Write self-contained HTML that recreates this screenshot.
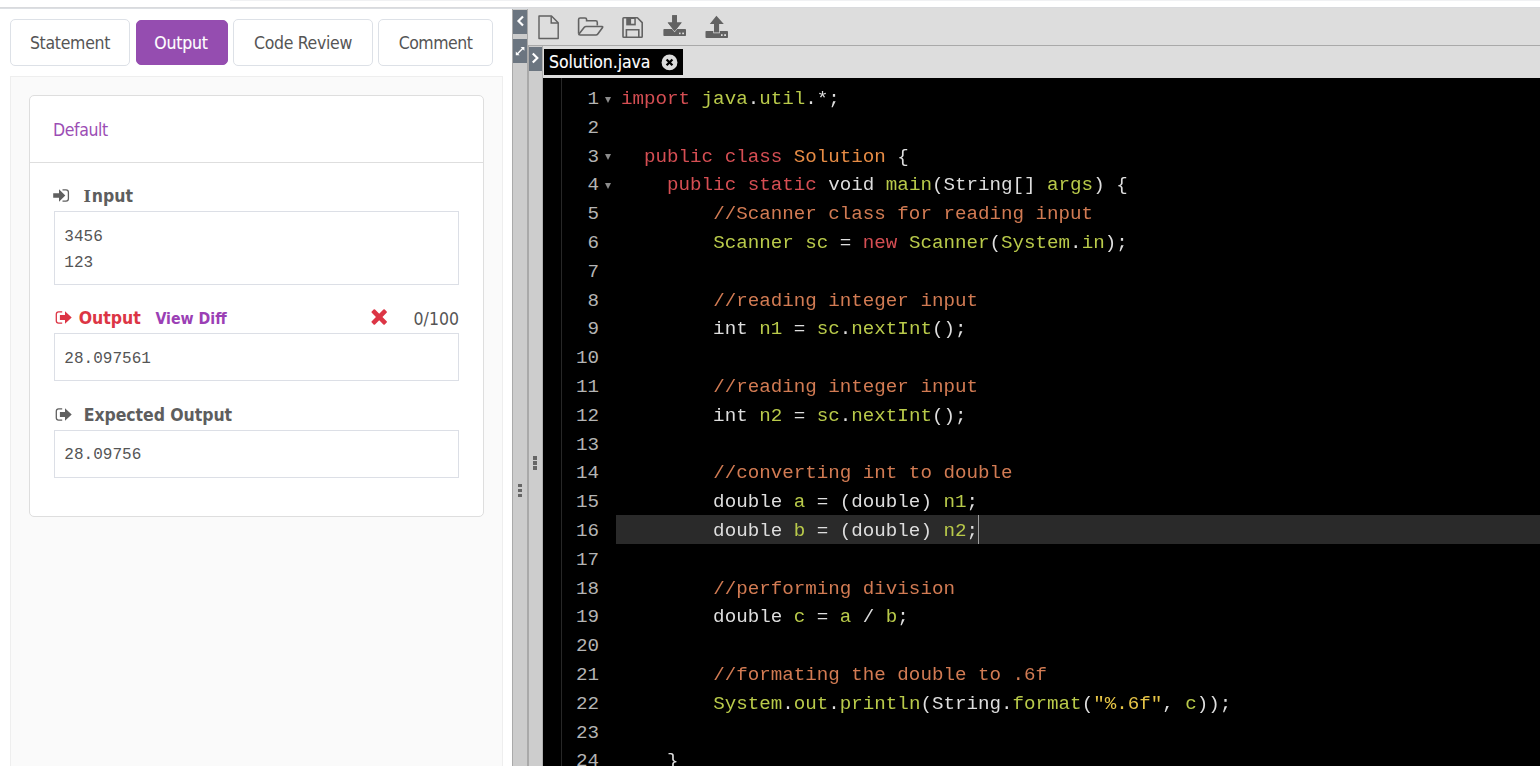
<!DOCTYPE html>
<html lang="en">
<head>
<meta charset="utf-8">
<title>Solution.java - Output</title>
<style>
html,body{margin:0;padding:0;}
body{width:1540px;height:766px;overflow:hidden;background:#fff;position:relative;
  font-family:"DejaVu Sans Condensed","Liberation Sans",sans-serif;font-size:17.5px;color:#555;letter-spacing:-0.3px;}
.abs{position:absolute;}
/* top lines */
#topfaint{left:230px;top:0;width:1310px;height:1px;background:#f0f1f3;}
#topline2{left:0;top:7px;width:1540px;height:1px;background:#d9dadd;}
#topline{left:0;top:7px;width:528px;height:2px;background:#dcdfe3;}
/* left tabs */
.tab{position:absolute;box-sizing:border-box;border:1px solid #dde1e7;border-radius:5px;background:#fff;
  color:#555;text-align:center;height:47px;top:19px;line-height:47px;font-size:17.5px;}
.tab.on{background:#954db0;border-color:#954db0;color:#fff;-webkit-text-stroke:0.12px #fff;top:20px;height:45px;line-height:45px;}
#panel{left:10px;top:76px;width:493px;height:700px;box-sizing:border-box;background:#fafafa;border:1px solid #eeeeee;}
#card{left:29px;top:95px;width:455px;height:422px;box-sizing:border-box;background:#fff;border:1px solid #dedede;border-radius:5px;}
#divider{left:30px;top:162px;width:453px;height:1px;background:#dedede;}
.box{position:absolute;box-sizing:border-box;left:54px;width:405px;border:1px solid #dcdfe6;background:#fff;}
.mono{position:absolute;letter-spacing:0.025px;font-family:"Liberation Mono",monospace;font-size:16px;color:#555;white-space:pre;line-height:26.25px;}
.h{position:absolute;font-weight:bold;font-size:17.5px;color:#5e5e5e;white-space:nowrap;line-height:20px;letter-spacing:0;}
/* splitter strips */
#strip1{left:512px;top:9px;width:17px;height:760px;background:#cccccc;border-left:1px solid #aaa;border-right:2px solid #a9a9a9;box-sizing:border-box;}
#strip2{left:529px;top:46px;width:14px;height:730px;background:#cdcdcd;border-right:1px solid #b0b0b0;box-sizing:border-box;}
.sbtn{position:absolute;background:#6b7580;}
/* toolbar */
#toolbar{left:528px;top:8px;width:1012px;height:37px;background:#dddddd;}
#tbline{left:528px;top:45px;width:1012px;height:1px;background:#a9a9a9;}
#tabrow{left:543px;top:46px;width:997px;height:32px;background:#dddddd;}
#ftab{left:544px;top:49px;width:139px;height:26px;background:#000;color:#fff;font-size:17.5px;line-height:26px;white-space:nowrap;}
/* editor */
#editor{left:543px;top:78px;width:997px;height:700px;background:#000;overflow:hidden;}
#gline{left:561px;top:78px;width:1px;height:700px;background:#272727;}
.ln{position:absolute;letter-spacing:0;left:543px;width:56px;text-align:right;font-family:"Liberation Mono",monospace;font-size:19.2px;line-height:28.8px;height:28.8px;color:#b4b4b4;white-space:pre;}
.cl{position:absolute;will-change:transform;letter-spacing:0;left:621px;font-family:"Liberation Mono",monospace;font-size:19.2px;line-height:28.8px;height:28.8px;color:#dedede;white-space:pre;}
.k{color:#d54e53;} .i{color:#b9ca4a;} .c{color:#d27b53;} .t{color:#e78c45;} .s{color:#e7c547;}
#active{left:616px;top:515px;width:924px;height:29px;background:#2a2a2a;}
#cursor{left:978px;top:515px;width:1.4px;height:29px;background:#9f9f9f;}
.fold{position:absolute;left:605px;width:0;height:0;border-left:3.5px solid transparent;border-right:3.5px solid transparent;border-top:6.3px solid #8c8c8c;}
</style>
</head>
<body>
<div class="abs" id="topfaint"></div>
<div class="abs" id="topline"></div>

<!-- left tabs -->
<div class="tab" style="left:10px;width:120px;">Statement</div>
<div class="tab on" style="left:136px;width:92px;padding-right:2px;letter-spacing:-0.2px;">Output</div>
<div class="tab" style="left:233px;width:140px;">Code Review</div>
<div class="tab" style="left:378px;width:115px;letter-spacing:-0.5px;">Comment</div>

<div class="abs" id="panel"></div>
<div class="abs" id="card"></div>
<div class="abs" id="divider"></div>
<div class="abs" id="deflt" style="left:53px;top:119.7px;letter-spacing:-0.4px;color:#9b4db4;font-size:17.5px;line-height:20px;white-space:nowrap;">Default</div>

<!-- Input -->
<svg class="abs" style="left:53px;top:188px;" width="17" height="15" viewBox="0 0 17 15"><path d="M0.2 5.2H6V1.2L12.3 7.5L6 13.8V9.8H0.2Z" fill="#606060"/><path d="M9.5 1.8H13Q15.4 1.8 15.4 4.2V10.8Q15.4 13.2 13 13.2H9.5" fill="none" stroke="#606060" stroke-width="1.3"/></svg>
<div class="h" id="hin" style="left:83.5px;top:186.4px;"><span style="font-family:'DejaVu Serif Condensed','DejaVu Serif',serif;letter-spacing:0.9px">I</span>nput</div>
<div class="box" style="top:211px;height:74px;"></div>
<div class="mono" id="m1" style="left:64.3px;top:223.8px;">3456
123</div>

<!-- Output -->
<svg class="abs" style="left:55px;top:310px;" width="18" height="15" viewBox="0 0 18 15"><path d="M7.2 1.9H3.6Q1.3 1.9 1.3 4.2V10.8Q1.3 13.1 3.6 13.1H7.2" fill="none" stroke="#dc3545" stroke-width="1.3"/><path d="M4.9 5.1H10V1.3L16.7 7.5L10 13.7V9.9H4.9Z" fill="#dc3545"/></svg>
<div class="h" id="hout" style="left:78.7px;top:308.2px;color:#dc3545;">Output</div>
<div class="h" id="vdiff" style="left:155.4px;top:308.8px;color:#9b3fb5;font-size:15.75px;">View Diff</div>
<svg class="abs" style="left:371px;top:309px;" width="17" height="17" viewBox="0 0 17 17"><g fill="#dc3545" transform="translate(8.2 8)"><rect x="-9.2" y="-2.3" width="18.4" height="4.6" rx="1" transform="rotate(45)"/><rect x="-9.2" y="-2.3" width="18.4" height="4.6" rx="1" transform="rotate(-45)"/></g></svg>
<div class="abs" id="score" style="left:413.6px;top:309px;letter-spacing:0;font-size:17.5px;line-height:20px;color:#555;white-space:nowrap;">0/100</div>
<div class="box" style="top:333px;height:48px;"></div>
<div class="mono" id="m2" style="left:64.3px;top:346px;">28.097561</div>

<!-- Expected -->
<svg class="abs" style="left:55px;top:406.8px;" width="18" height="15" viewBox="0 0 18 15"><path d="M7.2 1.9H3.6Q1.3 1.9 1.3 4.2V10.8Q1.3 13.1 3.6 13.1H7.2" fill="none" stroke="#606060" stroke-width="1.3"/><path d="M4.9 5.1H10V1.3L16.7 7.5L10 13.7V9.9H4.9Z" fill="#606060"/></svg>
<div class="h" id="hexp" style="left:83.7px;top:405.2px;letter-spacing:-0.06px;">Expected Output</div>
<div class="box" style="top:430px;height:48px;"></div>
<div class="mono" id="m3" style="left:64.3px;top:441.8px;">28.09756</div>

<!-- splitter strips -->
<div class="abs" id="strip1"></div>
<div class="sbtn" style="left:513px;top:10px;width:14px;height:23.5px;"></div>
<div class="sbtn" style="left:513px;top:39px;width:14px;height:23.5px;"></div>
<svg class="abs" style="left:513px;top:10px;" width="14" height="24" viewBox="0 0 14 24"><path d="M10 6.5L5.5 11L10 15.5" fill="none" stroke="#fff" stroke-width="2.2"/></svg>
<svg class="abs" style="left:513px;top:39px;" width="14" height="24" viewBox="0 0 14 24"><path d="M4 15.2L10.4 8.8" stroke="#fff" stroke-width="1.4" fill="none"/><path d="M7.6 7.9H11.4V11.7Z M2.8 12.4V16.2H6.6Z" fill="#fff"/></svg>
<!-- handle dots strip1 -->
<div class="abs" style="left:518px;top:483.5px;width:4px;height:3.5px;background:#666;"></div>
<div class="abs" style="left:518px;top:488.5px;width:4px;height:3.5px;background:#666;"></div>
<div class="abs" style="left:518px;top:493.5px;width:4px;height:3.5px;background:#666;"></div>

<!-- toolbar -->
<div class="abs" id="toolbar"></div>
<div class="abs" id="topline2"></div>
<div class="abs" id="tbline"></div>
<div class="abs" id="tabrow"></div>
<div class="abs" id="strip2"></div>
<div class="sbtn" style="left:529px;top:47px;width:13px;height:23.5px;"></div>
<svg class="abs" style="left:529px;top:47px;" width="13" height="24" viewBox="0 0 13 24"><path d="M3.8 6.5L8.3 11L3.8 15.5" fill="none" stroke="#fff" stroke-width="2.2"/></svg>
<div class="abs" style="left:533.4px;top:456px;width:4px;height:3.5px;background:#666;"></div>
<div class="abs" style="left:533.4px;top:461px;width:4px;height:3.5px;background:#666;"></div>
<div class="abs" style="left:533.4px;top:466px;width:4px;height:3.5px;background:#666;"></div>

<!-- toolbar icons -->
<svg class="abs" id="ic1" style="left:537px;top:14px;" width="24" height="27" viewBox="0 0 24 27"><path d="M2 2H14.5L21.2 8.7V24.4H2Z" fill="none" stroke="#626262" stroke-width="1.45" stroke-linejoin="round"/><path d="M14.2 2.2V9H21" fill="none" stroke="#626262" stroke-width="1.45"/></svg>
<svg class="abs" id="ic2" style="left:576px;top:15px;" width="30" height="24" viewBox="0 0 30 24"><path d="M2.6 18.5V4.6Q2.6 3 4.2 3H9Q10.6 3 10.6 4.6V5.8H19.6Q21.3 5.8 21.3 7.4V10.6" fill="none" stroke="#626262" stroke-width="1.6"/><path d="M3 19L8.3 12.3Q9 11.5 10 11.5H26Q27.2 11.6 26.4 12.7L21.6 19.2Q21 20 20 20H4.2Q2.6 20 2.6 18.5" fill="none" stroke="#626262" stroke-width="1.6" stroke-linejoin="round"/></svg>
<svg class="abs" id="ic3" style="left:621px;top:15px;" width="24" height="25" viewBox="0 0 24 25"><path d="M2 3.6Q2 2.8 2.8 2.8H16.4L21.2 7.6V21.4Q21.2 22.2 20.4 22.2H2.8Q2 22.2 2 21.4Z" fill="none" stroke="#626262" stroke-width="1.6" stroke-linejoin="round"/><path d="M5.4 22V14.8H17.8V22" fill="none" stroke="#626262" stroke-width="1.6"/><path d="M5.2 2.8H14.8V10.4H5.2Z" fill="#626262"/><rect x="10.1" y="4" width="3.2" height="4.7" fill="#dddddd"/></svg>
<svg class="abs" id="ic4" style="left:662px;top:14px;" width="26" height="24" viewBox="0 0 26 24"><path d="M2.2 15H23.2Q24 15 24 15.8V21.2Q24 22 23.2 22H2.2Q1.4 22 1.4 21.2V15.8Q1.4 15 2.2 15Z" fill="#626262"/><path d="M10.2 1.2H15V8.4H19.7L12.6 17.2L5.7 8.4H10.2Z" fill="#626262" stroke="#dddddd" stroke-width="1.4" paint-order="stroke"/><path d="M10.2 1.2H15V8.4H19.7L12.6 17.2L5.7 8.4H10.2Z" fill="#626262"/><rect x="17" y="18.6" width="1.6" height="1.6" fill="#dddddd"/><rect x="20.2" y="18.6" width="1.8" height="1.6" fill="#dddddd"/></svg>
<svg class="abs" id="ic5" style="left:704px;top:14px;" width="26" height="26" viewBox="0 0 26 26"><path d="M2.3 17H23.2Q24 17 24 17.8V23.2Q24 24 23.2 24H2.3Q1.5 24 1.5 23.2V17.8Q1.5 17 2.3 17Z" fill="#626262"/><path d="M10 17H15.1V18.6H10Z" fill="#626262" stroke="#dddddd" stroke-width="1.4"/><path d="M12.4 1.8L19.8 10H15.1V18.4H10V10H5.8Z" fill="#626262"/><rect x="17" y="20.2" width="1.6" height="1.8" fill="#dddddd"/><rect x="20.2" y="20.2" width="1.8" height="1.8" fill="#dddddd"/></svg>

<!-- file tab -->
<div class="abs" id="ftab"><span style="position:absolute;left:5px;top:0.2px;letter-spacing:-0.05px;-webkit-text-stroke:0.12px #fff;">Solution.java</span></div>
<svg class="abs" style="left:660.6px;top:54px;" width="17" height="17" viewBox="0 0 17 17"><circle cx="8.5" cy="8.4" r="7.9" fill="#dcdcdc"/><path d="M5.6 5.5L11.4 11.3M11.4 5.5L5.6 11.3" stroke="#000" stroke-width="2.3" fill="none"/></svg>

<!-- editor -->
<div class="abs" id="editor"></div>
<div class="abs" id="gline"></div>
<div class="abs" id="active"></div>
<div id="code">
<div class="ln" style="top:85.0px">1</div>
<div class="fold" style="top:96.5px"></div>
<div class="cl" style="top:85.0px"><span class="k">import</span> <span class="i">java</span>.<span class="i">util</span>.*;</div>
<div class="ln" style="top:113.8px">2</div>
<div class="ln" style="top:142.6px">3</div>
<div class="fold" style="top:154.2px"></div>
<div class="cl" style="top:142.6px">  <span class="k">public</span> <span class="k">class</span> <span class="t">Solution</span> {</div>
<div class="ln" style="top:171.4px">4</div>
<div class="fold" style="top:183.0px"></div>
<div class="cl" style="top:171.4px">    <span class="k">public</span> <span class="k">static</span> void <span class="i">main</span>(String[] <span class="i">args</span>) {</div>
<div class="ln" style="top:200.2px">5</div>
<div class="cl" style="top:200.2px">        <span class="c">//Scanner class for reading input</span></div>
<div class="ln" style="top:228.9px">6</div>
<div class="cl" style="top:228.9px">        <span class="i">Scanner</span> <span class="i">sc</span> = <span class="k">new</span> <span class="i">Scanner</span>(<span class="i">System</span>.<span class="i">in</span>);</div>
<div class="ln" style="top:257.8px">7</div>
<div class="ln" style="top:286.6px">8</div>
<div class="cl" style="top:286.6px">        <span class="c">//reading integer input</span></div>
<div class="ln" style="top:315.4px">9</div>
<div class="cl" style="top:315.4px">        int <span class="i">n1</span> = <span class="i">sc</span>.<span class="i">nextInt</span>();</div>
<div class="ln" style="top:344.1px">10</div>
<div class="ln" style="top:372.9px">11</div>
<div class="cl" style="top:372.9px">        <span class="c">//reading integer input</span></div>
<div class="ln" style="top:401.8px">12</div>
<div class="cl" style="top:401.8px">        int <span class="i">n2</span> = <span class="i">sc</span>.<span class="i">nextInt</span>();</div>
<div class="ln" style="top:430.6px">13</div>
<div class="ln" style="top:459.4px">14</div>
<div class="cl" style="top:459.4px">        <span class="c">//converting int to double</span></div>
<div class="ln" style="top:488.1px">15</div>
<div class="cl" style="top:488.1px">        double <span class="i">a</span> = (double) <span class="i">n1</span>;</div>
<div class="ln" style="top:517.0px">16</div>
<div class="cl" style="top:517.0px">        double <span class="i">b</span> = (double) <span class="i">n2</span>;</div>
<div class="ln" style="top:545.8px">17</div>
<div class="ln" style="top:574.6px">18</div>
<div class="cl" style="top:574.6px">        <span class="c">//performing division</span></div>
<div class="ln" style="top:603.4px">19</div>
<div class="cl" style="top:603.4px">        double <span class="i">c</span> = <span class="i">a</span> / <span class="i">b</span>;</div>
<div class="ln" style="top:632.2px">20</div>
<div class="ln" style="top:661.0px">21</div>
<div class="cl" style="top:661.0px">        <span class="c">//formating the double to .6f</span></div>
<div class="ln" style="top:689.8px">22</div>
<div class="cl" style="top:689.8px">        <span class="i">System</span>.<span class="i">out</span>.<span class="i">println</span>(String.<span class="i">format</span>(<span class="s">&quot;%.6f&quot;</span>, <span class="i">c</span>));</div>
<div class="ln" style="top:718.6px">23</div>
<div class="ln" style="top:747.4px">24</div>
<div class="cl" style="top:747.4px">    }</div>
</div><!--/code-->
<div class="abs" id="cursor"></div>
</body>
</html>
